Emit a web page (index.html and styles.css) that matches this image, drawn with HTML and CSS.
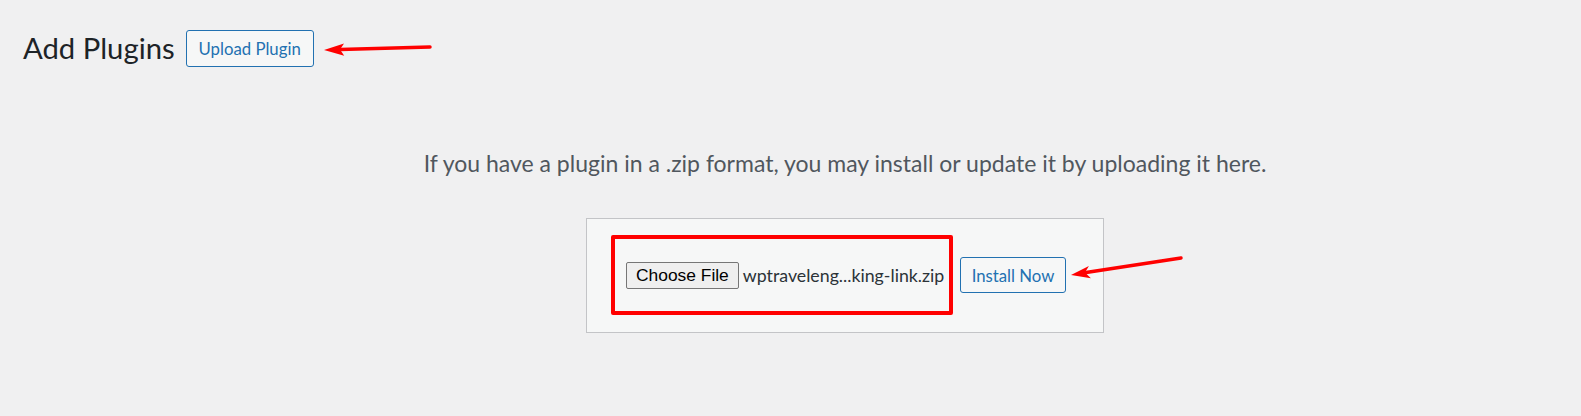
FILE: index.html
```html
<!DOCTYPE html>
<html lang="en">
<head>
    <meta charset="UTF-8" />
    <meta name="viewport" content="width=device-width, initial-scale=1.0"/>
    <title>Add Plugins</title>
    <link rel="stylesheet" href="styles.css">
</head>
<body>
    <div class="wrap">
        <div class="page-header">
            <h1>Add Plugins</h1>
            <a class="button page-title-action" href="#">Upload Plugin</a>
        </div>

        <div class="upload-plugin">
            <p class="install-help">If you have a plugin in a .zip format, you may install or update it by uploading it here.</p>
            <form class="wp-upload-form">
                <div class="file-field">
                    <button type="button" class="file-btn">Choose File</button>
                    <span class="file-name">wptraveleng...king-link.zip</span>
                </div>
                <button type="button" class="button">Install Now</button>
            </form>
        </div>

        <!-- annotation arrows -->
        <svg class="arrows" width="1581" height="416" viewBox="0 0 1581 416">
            <line x1="430" y1="47" x2="340" y2="49.6" />
            <polygon points="324,50 344,43.5 340,49.6 344.2,55.8" />
            <line x1="1181" y1="258" x2="1086" y2="272.6" />
            <polygon points="1071,275 1088.9,266 1085,272.6 1090.9,278.3" />
        </svg>
    </div>
</body>
</html>
```

FILE: styles.css
```css
body {
    margin: 0;
    padding: 0;
    background-color: #f0f0f1;
    color: #3c434a;
    font-family: Lato, "Open Sans", sans-serif;
}

.wrap {
    position: relative;
    height: 416px;
    overflow: hidden;
}

.page-header {
    display: flex;
    align-items: center;
    gap: 11px;
    padding: 28.5px 0 0 23px;
}

.page-header h1 {
    margin: 0;
    padding-bottom: 3px;
    font-size: 29.25px;
    font-weight: 400;
    line-height: 37px;
    color: #1d2327;
}

.button {
    display: inline-flex;
    align-items: center;
    justify-content: center;
    box-sizing: border-box;
    padding: 0 10px;
    background-color: #f6f7f7;
    color: #2271b1;
    border: 1px solid #2271b1;
    border-radius: 3px;
    font-family: Lato, "Open Sans", sans-serif;
    font-size: 16.75px;
    white-space: nowrap;
    text-decoration: none;
    cursor: pointer;
}

.page-title-action {
    width: 128px;
    height: 37px;
}

.upload-plugin {
    margin-left: 109px;
    display: flex;
    flex-direction: column;
    align-items: center;
}

.install-help {
    margin: 79px 0 0;
    font-size: 23px;
    line-height: 30px;
    color: #50575e;
    text-align: center;
}

.wp-upload-form {
    display: flex;
    align-items: center;
    gap: 7px;
    box-sizing: border-box;
    width: 518px;
    height: 115px;
    margin-top: 40px;
    padding: 0 24px;
    background-color: #f6f7f7;
    border: 1px solid #c3c4c7;
}

.wp-upload-form .button {
    width: 106px;
    height: 36px;
}

/* red highlight round the file input */
.file-field {
    display: flex;
    align-items: center;
    gap: 4px;
    width: 342px;
    height: 80px;
    box-sizing: border-box;
    padding: 0 4px 0 11px;
    border: 4px solid #ff0000;
    border-radius: 2px;
}

.file-btn {
    height: 27px;
    padding: 0 9px;
    background-color: #efefef;
    color: #000;
    border: 1px solid #767676;
    border-radius: 2px;
    font-family: "Liberation Sans", Arial, sans-serif;
    font-size: 17.4px;
    white-space: nowrap;
}

.file-name {
    font-size: 17.75px;
    color: #2c3338;
    white-space: nowrap;
}

.arrows {
    position: absolute;
    top: 0;
    left: 0;
    pointer-events: none;
}

.arrows line {
    stroke: #ff0000;
    stroke-width: 3.5;
    stroke-linecap: round;
}

.arrows polygon {
    fill: #ff0000;
}
```
